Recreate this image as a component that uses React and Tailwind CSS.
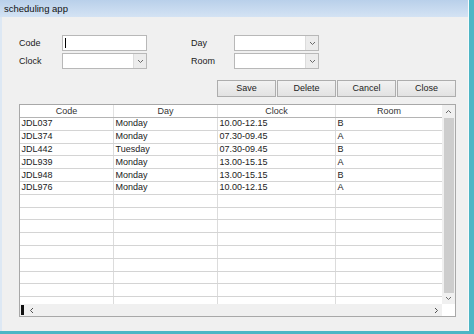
import React from "react";

const rows = [
  ["JDL037", "Monday", "10.00-12.15", "B"],
  ["JDL374", "Monday", "07.30-09.45", "A"],
  ["JDL442", "Tuesday", "07.30-09.45", "B"],
  ["JDL939", "Monday", "13.00-15.15", "A"],
  ["JDL948", "Monday", "13.00-15.15", "B"],
  ["JDL976", "Monday", "10.00-12.15", "A"],
];
const allRows = [...rows, ...Array.from({ length: 10 }, () => ["", "", "", ""])];
const widths = ["w-[94px]", "w-[104px]", "w-[118px]", "w-[106px]"];

function ChevDown() {
  return (
    <svg width="7" height="5" viewBox="0 0 7 5">
      <path d="M1 1 L3.5 3.5 L6 1" fill="none" stroke="#6a6a6a" strokeWidth="1" />
    </svg>
  );
}
function ChevUp() {
  return (
    <svg width="7" height="5" viewBox="0 0 7 5">
      <path d="M1 4 L3.5 1.5 L6 4" fill="none" stroke="#6a6a6a" strokeWidth="1" />
    </svg>
  );
}
function ChevLeft() {
  return (
    <svg width="5" height="7" viewBox="0 0 5 7">
      <path d="M4 1 L1.5 3.5 L4 6" fill="none" stroke="#505050" strokeWidth="1" />
    </svg>
  );
}
function ChevRight() {
  return (
    <svg width="5" height="7" viewBox="0 0 5 7">
      <path d="M1 1 L3.5 3.5 L1 6" fill="none" stroke="#505050" strokeWidth="1" />
    </svg>
  );
}

function Combo() {
  return (
    <div className="w-[85px] h-[16px] bg-white border border-[#b8b8b8] flex">
      <div className="flex-1" />
      <div className="w-[13px] h-full bg-[#ececec] border-l border-[#dcdcdc] flex items-center justify-center">
        <ChevDown />
      </div>
    </div>
  );
}

function Btn({ children }) {
  return (
    <div className="w-[59px] h-[17px] border border-[#adadad] bg-gradient-to-b from-[#f2f2f2] to-[#e2e2e2] flex items-center justify-center text-[#222]">
      {children}
    </div>
  );
}

export default function App() {
  return (
    <div className="w-[474px] h-[334px] flex flex-col overflow-hidden font-['Liberation_Sans',Arial,sans-serif] text-[9px] text-[#1a1a1a] leading-none">
      <div className="flex flex-1 min-h-0">
        <div className="flex-1 flex flex-col min-w-0">
          <div className="h-[17px] bg-gradient-to-b from-[#b9d0ea] to-[#d4e3f4] flex items-center pl-[4px] text-[9.5px] text-[#111]">
            scheduling app
          </div>
          <div className="flex-1 bg-[#f0f0f0] border-l-2 border-[#dde8f4] pl-[17px] pt-[18px] flex flex-col">
            <div className="flex flex-col gap-[2px]">
              <div className="flex items-center h-[16px]">
                <div className="w-[43px]">Code</div>
                <div className="w-[85px] h-[16px] bg-white border border-[#b8b8b8] flex items-center pl-[2px]">
                  <div className="w-px h-[10px] bg-black" />
                </div>
                <div className="w-[43px] ml-[44px]">Day</div>
                <Combo />
              </div>
              <div className="flex items-center h-[16px]">
                <div className="w-[43px]">Clock</div>
                <Combo />
                <div className="w-[43px] ml-[44px]">Room</div>
                <Combo />
              </div>
            </div>
            <div className="flex gap-px ml-[198px] mt-[11px]">
              <Btn>Save</Btn>
              <Btn>Delete</Btn>
              <Btn>Cancel</Btn>
              <Btn>Close</Btn>
            </div>
            <div className="mt-[7px] w-[437px] h-[213px] border border-[#a8a8a8] flex flex-col bg-white">
              <div className="flex h-[199px]">
                <div className="w-[422px] flex flex-col overflow-hidden">
                  <div className="flex h-[13px] shrink-0 border-b border-[#b4b4b4]">
                    {["Code", "Day", "Clock", "Room"].map((h, i) => (
                      <div
                        key={h}
                        className={`${widths[i]} ${i < 3 ? "border-r border-[#e2e2e2]" : ""} flex items-center justify-center text-[#333]`}
                      >
                        {h}
                      </div>
                    ))}
                  </div>
                  {allRows.map((r, ri) => (
                    <div key={ri} className="flex h-[12.8px] shrink-0 border-b border-[#d4d4d4]">
                      {r.map((c, ci) => (
                        <div
                          key={ci}
                          className={`${widths[ci]} ${ci < 3 ? "border-r border-[#dcdcdc]" : ""} flex items-center pl-[1.5px] text-[#222]`}
                        >
                          {c}
                        </div>
                      ))}
                    </div>
                  ))}
                </div>
                <div className="w-[13px] bg-[#f0f0f0] flex flex-col">
                  <div className="h-[13px] flex items-center justify-center">
                    <ChevUp />
                  </div>
                  <div className="flex-1 ml-[2px] mr-px bg-[#cdcdcd]" />
                  <div className="h-[11px] flex items-center justify-center">
                    <ChevDown />
                  </div>
                </div>
              </div>
              <div className="flex h-[12px]">
                <div className="w-[422px] bg-[#f0f0f0] flex items-center">
                  <div className="w-[3px] h-[10px] bg-[#111] ml-px" />
                  <div className="ml-[5px] flex items-center">
                    <ChevLeft />
                  </div>
                  <div className="flex-1" />
                  <div className="mr-[3px] flex items-center">
                    <ChevRight />
                  </div>
                </div>
                <div className="w-[13px] bg-white" />
              </div>
            </div>
          </div>
        </div>
        <div className="w-px bg-[#f7fafc]" />
        <div className="w-[5px] bg-[#4db6c5]" />
      </div>
      <div className="h-[3px] bg-[#4db6c5]" />
    </div>
  );
}
